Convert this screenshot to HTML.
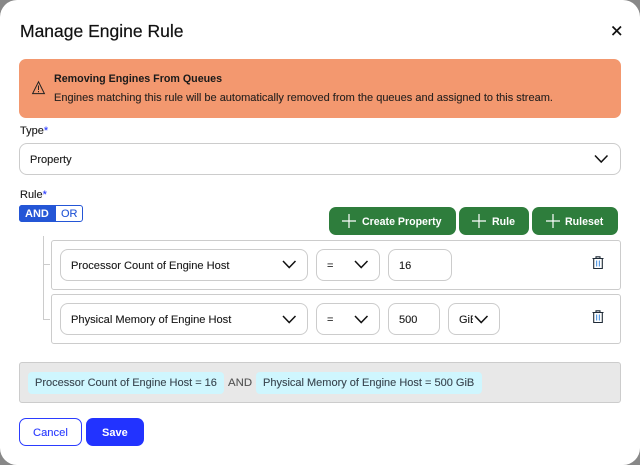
<!DOCTYPE html>
<html><head><meta charset="utf-8"><style>
html,body{margin:0;padding:0;background:#888;}
body{width:640px;height:465px;position:relative;overflow:hidden;font-family:"Liberation Sans",sans-serif;color:#1a1a1a;}
.m{position:absolute;left:0;top:0;width:640px;height:465px;background:#fff;border-radius:17px;}
.a{position:absolute;box-sizing:border-box;}
.t{position:absolute;white-space:nowrap;line-height:16px;font-size:11px;-webkit-text-stroke:.12px currentColor;}
.b{border:1px solid #ccc;border-radius:8px;background:#fff;}
.g{background:#2e7d3c;border-radius:7px;}
.w{color:#fff;font-weight:bold;font-size:10.6px;-webkit-text-stroke:0;}
svg{position:absolute;overflow:visible;}
</style></head><body>
<div class="m"></div>
<div class="t" style="left:20px;top:20px;font-size:17.5px;line-height:22px;color:#111;-webkit-text-stroke:.2px #111;">Manage Engine Rule</div>
<svg style="left:611px;top:25px" width="11" height="11"><path d="M1.5 1.5L10 10M10 1.5L1.5 10" stroke="#111" stroke-width="1.7" fill="none"/></svg>

<div class="a" style="left:19px;top:59px;width:602px;height:59px;background:#f3986f;border-radius:7px;"></div>
<svg style="left:32px;top:81px" width="14" height="14"><path d="M6.5 0.8L0.6 12.6H12.4Z" stroke="#222" stroke-width="1" fill="none"/><path d="M6.5 4.5V9M6.5 10V11.2" stroke="#222" stroke-width="1" fill="none"/></svg>
<div class="t" style="left:54px;top:71px;font-weight:bold;font-size:10.7px;color:#1a1a1a;-webkit-text-stroke:0;">Removing Engines From Queues</div>
<div class="t" style="left:54px;top:90px;font-size:11px;color:#2a2320;">Engines matching this rule will be automatically removed from the queues and assigned to this stream.</div>

<div class="t" style="left:20px;top:123px;font-size:11px;">Type<span style="color:#2b3cff">*</span></div>
<div class="a b" style="left:19px;top:143px;width:602px;height:32px;"></div>
<div class="t" style="left:30px;top:152px;font-size:11px;">Property</div>
<svg style="left:594px;top:154px" width="15" height="10"><path d="M1 1.5L7.2 8L13.5 1.5" stroke="#111" stroke-width="1.5" fill="none"/></svg>

<div class="t" style="left:20px;top:187px;font-size:11px;">Rule<span style="color:#2b3cff">*</span></div>
<div class="a" style="left:19px;top:205px;width:64px;height:17px;border:1px solid #2456d6;border-radius:3px;background:#fff;"></div>
<div class="a" style="left:19px;top:205px;width:37px;height:17px;background:#2456d6;border-radius:3px 0 0 3px;"></div>
<div class="t" style="left:25px;top:206px;color:#fff;font-weight:bold;font-size:11px;-webkit-text-stroke:0;">AND</div>
<div class="t" style="left:61px;top:206px;color:#2456d6;font-size:11px;">OR</div>

<div class="a g" style="left:329px;top:207px;width:127px;height:28px;"></div>
<div class="a g" style="left:459px;top:207px;width:70px;height:28px;"></div>
<div class="a g" style="left:532px;top:207px;width:86px;height:28px;"></div>
<svg style="left:342px;top:214px" width="14" height="14"><path d="M7 0V14M0 7H14" stroke="#fff" stroke-width="1.2"/></svg>
<svg style="left:472px;top:214px" width="14" height="14"><path d="M7 0V14M0 7H14" stroke="#fff" stroke-width="1.2"/></svg>
<svg style="left:546px;top:214px" width="14" height="14"><path d="M7 0V14M0 7H14" stroke="#fff" stroke-width="1.2"/></svg>
<div class="t w" style="left:362px;top:214px;">Create Property</div>
<div class="t w" style="left:492px;top:214px;">Rule</div>
<div class="t w" style="left:565px;top:214px;">Ruleset</div>

<div class="a" style="left:43px;top:236px;width:7px;height:84px;border-left:1px solid #ccc;border-bottom:1px solid #ccc;"></div>
<div class="a" style="left:43px;top:264px;width:7px;height:1px;background:#ccc;"></div>

<div class="a" style="left:51px;top:240px;width:570px;height:50px;border:1px solid #ccc;border-radius:3px;"></div>
<div class="a" style="left:51px;top:294px;width:570px;height:50px;border:1px solid #ccc;border-radius:3px;"></div>

<div class="a b" style="left:60px;top:249px;width:248px;height:32px;"></div>
<div class="t" style="left:71px;top:258px;font-size:11.1px;">Processor Count of Engine Host</div>
<svg style="left:282px;top:260px" width="15" height="10"><path d="M1 1L7.2 7.5L13.5 1" stroke="#111" stroke-width="1.5" fill="none"/></svg>
<div class="a b" style="left:316px;top:249px;width:64px;height:32px;"></div>
<div class="t" style="left:327px;top:258px;">=</div>
<svg style="left:354px;top:260px" width="15" height="10"><path d="M1 1L7.2 7.5L13.5 1" stroke="#111" stroke-width="1.5" fill="none"/></svg>
<div class="a b" style="left:388px;top:249px;width:64px;height:32px;"></div>
<div class="t" style="left:399px;top:258px;">16</div>
<svg style="left:592px;top:256px" width="12" height="14"><path d="M.5 2.5H11.5M4 2.5V.8H8V2.5M1.7 2.5V12.5H10.3V2.5" stroke="#1f2a36" stroke-width="1.1" fill="none"/><path d="M4.6 4.5V10.5M7.4 4.5V10.5" stroke="#5a9be0" stroke-width="1.2" fill="none"/></svg>

<div class="a b" style="left:60px;top:303px;width:248px;height:32px;"></div>
<div class="t" style="left:71px;top:312px;font-size:11.1px;">Physical Memory of Engine Host</div>
<svg style="left:282px;top:315px" width="15" height="10"><path d="M1 1L7.2 7.5L13.5 1" stroke="#111" stroke-width="1.5" fill="none"/></svg>
<div class="a b" style="left:316px;top:303px;width:64px;height:32px;"></div>
<div class="t" style="left:327px;top:312px;">=</div>
<svg style="left:354px;top:315px" width="15" height="10"><path d="M1 1L7.2 7.5L13.5 1" stroke="#111" stroke-width="1.5" fill="none"/></svg>
<div class="a b" style="left:388px;top:303px;width:52px;height:32px;"></div>
<div class="t" style="left:399px;top:312px;">500</div>
<div class="a b" style="left:448px;top:303px;width:52px;height:32px;"></div>
<div class="t" style="left:459px;top:312px;width:14px;overflow:hidden;">GiB</div>
<svg style="left:474px;top:315px" width="15" height="10"><path d="M1 1L7.2 7.5L13.5 1" stroke="#111" stroke-width="1.5" fill="none"/></svg>
<svg style="left:592px;top:310px" width="12" height="14"><path d="M.5 2.5H11.5M4 2.5V.8H8V2.5M1.7 2.5V12.5H10.3V2.5" stroke="#1f2a36" stroke-width="1.1" fill="none"/><path d="M4.6 4.5V10.5M7.4 4.5V10.5" stroke="#5a9be0" stroke-width="1.2" fill="none"/></svg>

<div class="a" style="left:19px;top:362px;width:602px;height:41px;background:#e8e8e8;border:1px solid #ccc;border-radius:3px;"></div>
<div class="a" style="left:28px;top:372px;width:196px;height:22px;background:#cff6fe;border-radius:4px;"></div>
<div class="a" style="left:256px;top:372px;width:226px;height:22px;background:#cff6fe;border-radius:4px;"></div>
<div class="t" style="left:35px;top:375px;color:#3a4650;">Processor Count of Engine Host = 16</div>
<div class="t" style="left:228px;top:375px;color:#555;font-size:11.4px;">AND</div>
<div class="t" style="left:263px;top:375px;color:#3a4650;">Physical Memory of Engine Host = 500 GiB</div>

<div class="a" style="left:19px;top:418px;width:63px;height:28px;border:1px solid #2b3cff;border-radius:7px;background:#fff;"></div>
<div class="t" style="left:33px;top:425px;color:#2b3cff;font-size:11.2px;">Cancel</div>
<div class="a" style="left:86px;top:418px;width:58px;height:28px;background:#2233ff;border-radius:7px;"></div>
<div class="t" style="left:102px;top:425px;color:#fff;font-weight:bold;font-size:11px;-webkit-text-stroke:0;">Save</div>
</body></html>
